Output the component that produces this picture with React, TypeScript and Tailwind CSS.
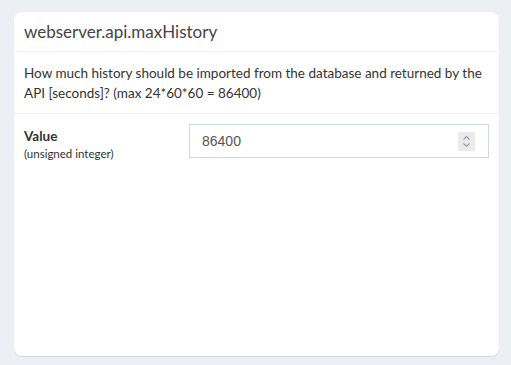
export default function App() {
  return (
    <div
      className="flex h-[365px] w-[511px] bg-[#ecf0f5] pl-[14px] pr-[12px] pt-[12px] pb-[9px] text-[#333]"
      style={{ fontFamily: "Lato, 'Noto Sans', sans-serif" }}
    >
      <div className="flex flex-1 flex-col rounded-[8px] bg-white shadow-[0_1px_1px_rgba(0,0,0,0.1)]">
        <div className="flex h-[40px] items-center border-b border-[#f0f0f0] px-[10px]">
          <h3 className="text-[17px] leading-none text-[#444]">webserver.api.maxHistory</h3>
        </div>
        <div className="border-b border-[#f0f0f0] px-[10px] pt-[11px] pb-[10px]">
          <p className="text-[13.5px] leading-[20px]">
            How much history should be imported from the database and returned by the API [seconds]? (max
            24*60*60 = 86400)
          </p>
        </div>
        <div className="flex px-[10px] pt-[10px]">
          <div className="flex w-[165px] flex-col pt-[2px]">
            <span className="text-[13.5px] leading-[20px] font-bold">Value</span>
            <span className="text-[11.5px] leading-[16px]">(unsigned integer)</span>
          </div>
          <div className="flex h-[34px] flex-1 items-center justify-between border border-[#d2d6de] pl-[12px] pr-[13px]">
            <span className="text-[14px] text-[#555]" style={{ fontFamily: "'Liberation Sans', Arial, sans-serif" }}>
              86400
            </span>
            <div className="flex h-[19px] w-[17px] items-center justify-center bg-[#eaeaef]">
              <svg width="9" height="15" viewBox="0 0 9 15" fill="none" stroke="#999" strokeWidth="1.1">
                <path d="M1.5 5.5 L4.5 2.5 L7.5 5.5" />
                <path d="M1.5 9.5 L4.5 12.5 L7.5 9.5" />
              </svg>
            </div>
          </div>
        </div>
      </div>
    </div>
  );
}
